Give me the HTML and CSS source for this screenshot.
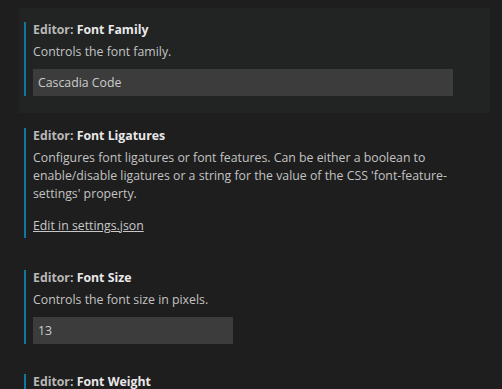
FILE: index.html
```html
<!DOCTYPE html>
<html>
<head>
<meta charset="utf-8">
<link rel="stylesheet" href="styles.css">
</head>
<body>
<div class="list">
  <div class="row focused">
    <div class="item">
      <div class="title"><span class="cat">Editor: </span><span class="key">Font Family</span></div>
      <div class="desc">Controls the font family.</div>
      <div class="input wide">Cascadia Code</div>
    </div>
  </div>
  <div class="row">
    <div class="item">
      <div class="title"><span class="cat">Editor: </span><span class="key">Font Ligatures</span></div>
      <div class="desc">Configures font ligatures or font features. Can be either a boolean to enable/disable ligatures or a string for the value of the CSS 'font-feature-settings' property.</div>
      <a class="link" href="#">Edit in settings.json</a>
    </div>
  </div>
  <div class="row">
    <div class="item">
      <div class="title"><span class="cat">Editor: </span><span class="key">Font Size</span></div>
      <div class="desc">Controls the font size in pixels.</div>
      <div class="input narrow">13</div>
    </div>
  </div>
  <div class="row last">
    <div class="item">
      <div class="title"><span class="cat">Editor: </span><span class="key">Font Weight</span></div>
    </div>
  </div>
</div>
</body>
</html>
```

FILE: styles.css
```css
html, body {
  margin: 0;
  padding: 0;
  background: #1e1e1e;
  height: 100%;
  overflow: hidden;
}
body {
  font-family: "Open Sans", "Noto Sans", sans-serif;
  font-size: 12.3px;
  color: #c5c5c5;
}
.list {
  padding: 8px 12px 0 19px;
  display: flex;
  flex-direction: column;
}
.row {
  padding: 16px 0 17px 5px;
}
.row.focused {
  padding-top: 15px;
  background: #222323;
}
.row.last {
  padding-top: 14px;
}
.item {
  border-left: 2px solid #0f78a2;
  padding-left: 7px;
  max-width: 440px;
}
.title {
  line-height: 16px;
  font-weight: 700;
  margin-top: -1px;
}
.cat {
  color: #b8b8b8;
}
.key {
  color: #e8e8e8;
}
.desc {
  line-height: 18px;
  margin-top: 5px;
  color: #c3c3c3;
}
.input {
  background: #3c3c3c;
  height: 27px;
  line-height: 27px;
  padding-left: 5px;
  margin-top: 8px;
  color: #cccccc;
  box-sizing: border-box;
}
.input.wide {
  width: 420px;
}
.input.narrow {
  width: 200px;
}
.link {
  display: inline-block;
  color: #c8c8c8;
  text-decoration: underline;
  line-height: 18px;
  margin-top: 14px;
  margin-bottom: 3px;
  vertical-align: top;
}
```
